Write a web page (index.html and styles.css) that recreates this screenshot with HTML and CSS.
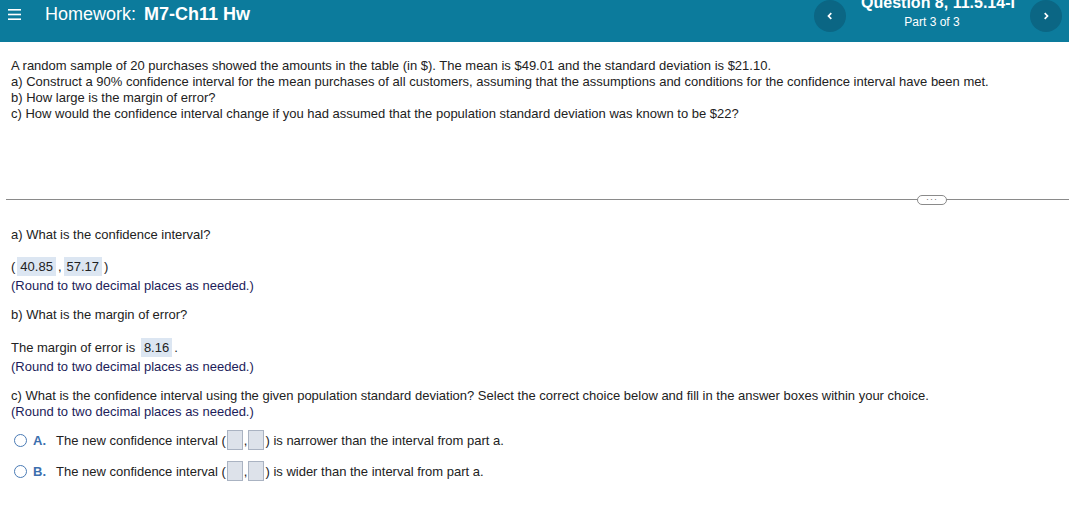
FILE: index.html
```html
<!DOCTYPE html>
<html>
<head>
<meta charset="utf-8">
<link rel="stylesheet" href="styles.css">
</head>
<body>
<header class="top">
  <div class="left">
    <svg class="menu" width="13" height="11" viewBox="0 0 13 11"><rect x="0" y="0" width="13" height="1.6" fill="#fff"/><rect x="0" y="4.7" width="13" height="1.6" fill="#fff"/><rect x="0" y="9.4" width="13" height="1.6" fill="#fff"/></svg>
    <span class="hw">Homework:</span><span class="hwname">M7-Ch11 Hw</span>
  </div>
  <div class="right">
    <div class="navbtn"><svg width="8" height="8" viewBox="0 0 8 8"><path d="M5.3 1.2 L2.5 4 L5.3 6.8" stroke="#fff" stroke-width="1.7" fill="none"/></svg></div>
    <div class="qinfo">
      <div class="qtitle">Question 8, 11.5.14-I</div>
      <div class="qpart">Part 3 of 3</div>
    </div>
    <div class="navbtn"><svg width="8" height="8" viewBox="0 0 8 8"><path d="M2.7 1.2 L5.5 4 L2.7 6.8" stroke="#fff" stroke-width="1.7" fill="none"/></svg></div>
  </div>
</header>
<section class="question">
  <p>A random sample of 20 purchases showed the amounts in the table (in $). The mean is $49.01 and the standard deviation is $21.10.</p>
  <p>a) Construct a 90% confidence interval for the mean purchases of all customers, assuming that the assumptions and conditions for the confidence interval have been met.</p>
  <p>b) How large is the margin of error?</p>
  <p>c) How would the confidence interval change if you had assumed that the population standard deviation was known to be $22?</p>
</section>
<div class="divider"><span class="pill">&middot;&middot;&middot;</span></div>
<section class="answers">
  <p class="q">a) What is the confidence interval?</p>
  <p class="ans">(<span class="box">40.85</span>,<span class="box">57.17</span>)</p>
  <p class="note">(Round to two decimal places as needed.)</p>
  <p class="q mt">b) What is the margin of error?</p>
  <p class="ans mt2">The margin of error is <span class="box">8.16</span>.</p>
  <p class="note">(Round to two decimal places as needed.)</p>
  <p class="q mt">c) What is the confidence interval using the given population standard deviation? Select the correct choice below and fill in the answer boxes within your choice.</p>
  <p class="note0">(Round to two decimal places as needed.)</p>
  <div class="choice c1"><span class="radio"></span><span class="letter">A.</span><span class="ctext">The new confidence interval (<span class="empty"></span>,<span class="empty"></span>) is narrower than the interval from part a.</span></div>
  <div class="choice c2"><span class="radio"></span><span class="letter">B.</span><span class="ctext">The new confidence interval (<span class="empty"></span>,<span class="empty"></span>) is wider than the interval from part a.</span></div>
</section>
</body>
</html>
```
FILE: styles.css
```css
html, body { margin: 0; padding: 0; background: #fff; }
body { font-family: "Liberation Sans", Arial, sans-serif; font-size: 13px; color: #222; }
p { margin: 0; }
.top {
  height: 42px; background: #0c7b9c; color: #fff;
  display: flex; justify-content: space-between; align-items: flex-start;
}
.left { display: flex; align-items: center; height: 29px; padding-left: 8px; }
.menu { margin-right: 24px; }
.hw { font-size: 18px; margin-right: 8px; }
.hwname { font-size: 18px; font-weight: bold; }
.right { display: flex; align-items: flex-start; padding-right: 7px; }
.navbtn {
  width: 32px; height: 32px; border-radius: 50%; background: #0b6684;
  display: flex; align-items: center; justify-content: center;
}
.qinfo { width: 184px; text-align: center; margin-top: -6px; }
.qtitle { font-size: 16px; font-weight: bold; line-height: 18px; }
.qpart { font-size: 12px; line-height: 14px; margin-top: 3px; padding-right: 12px; }
.question { height: 150px; box-sizing: border-box; padding: 16px 11px 0; }
.question p { line-height: 16px; }
.divider { margin-left: 6px; border-top: 1px solid #8a8a8a; height: 0; position: relative; margin-top: 7px; }
.pill {
  position: absolute; left: 911px; top: -5px; width: 28px; height: 8px;
  border: 1px solid #8a8a8a; border-radius: 5px; background: #fff;
  font-size: 9px; line-height: 7px; text-align: center; color: #777; letter-spacing: 1px;
}
.answers { padding: 27px 11px 0; }
.answers p { line-height: 16px; }
.q { color: #222; }
.mt { margin-top: 13px; }
.ans { margin-top: 14px; line-height: 20px !important; }
.mt2 { margin-top: 15px; }
.box { background: #dce6f2; padding: 2px 3px; margin: 0 2px; }
.note { color: #1c1c5a; margin-top: 1px; }
.note0 { color: #1c1c5a; }
.choice { display: flex; align-items: center; height: 24px; }
.c1 { margin-top: 8px; }
.c2 { margin-top: 7px; }
.radio {
  width: 13px; height: 13px; border: 1px solid #4a7bb5; border-radius: 50%;
  margin-left: 3px; margin-right: 6px; box-sizing: border-box; background: #fff;
}
.letter { color: #3c6fae; font-size: 13px; font-weight: bold; width: 23px; }
.ctext { display: flex; align-items: center; }
.empty {
  display: inline-block; width: 16px; height: 20px; background: #dde2ea;
  border: 1px solid #aab3c2; margin: 0 1px; box-sizing: border-box;
}
```
